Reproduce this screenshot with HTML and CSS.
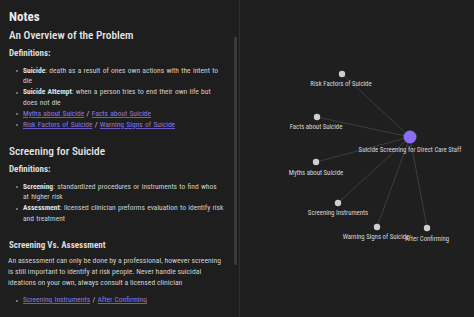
FILE: index.html
```html
<!DOCTYPE html>
<html>
<head>
<meta charset="utf-8">
<link rel="stylesheet" href="styles.css">
</head>
<body>
<div class="app">
  <div class="notes">
    <h1 class="title">Notes</h1>
    <h2 class="h2">An Overview of the Problem</h2>
    <h3 class="h3">Definitions:</h3>
    <ul class="list">
      <li><b>Suicide</b>: death as a result of ones own actions with the intent to die</li>
      <li><b>Suicide Attempt</b>: when a person tries to end their own life but does not die</li>
      <li><a href="#">Myths about Suicide</a> / <a href="#">Facts about Suicide</a></li>
      <li><a href="#">Risk Factors of Suicide</a> / <a href="#">Warning Signs of Suicide</a></li>
    </ul>
    <h2 class="h2 sec">Screening for Suicide</h2>
    <h3 class="h3">Definitions:</h3>
    <ul class="list">
      <li><b>Screening</b>: standardized procedures or instruments to find whos at higher risk</li>
      <li><b>Assessment</b>: licensed clinician preforms evaluation to identify risk and treatment</li>
    </ul>
    <h3 class="h3 sec3">Screening Vs. Assessment</h3>
    <p class="para">An assessment can only be done by a professional, however screening is still important to identify at risk people. Never handle suicidal ideations on your own, always consult a licensed clinician</p>
    <ul class="list">
      <li><a href="#">Screening Instruments</a> / <a href="#">After Confirming</a></li>
    </ul>
    <div class="scrollbar"></div>
  </div>
  <div class="graph">
    <svg class="graph-svg" width="234" height="317" viewBox="0 0 234 317">
      <g class="edges">
        <line x1="170" y1="137" x2="102" y2="74"/>
        <line x1="170" y1="137" x2="77" y2="117"/>
        <line x1="170" y1="137" x2="76" y2="162"/>
        <line x1="170" y1="137" x2="98" y2="203"/>
        <line x1="170" y1="137" x2="137" y2="227"/>
        <line x1="170" y1="137" x2="187" y2="228"/>
      </g>
      <g class="nodes">
        <circle cx="102" cy="74" r="3.2"/>
        <circle cx="77" cy="117" r="3.2"/>
        <circle cx="76" cy="162" r="3.2"/>
        <circle cx="98" cy="203" r="3.2"/>
        <circle cx="137" cy="227" r="3.2"/>
        <circle cx="187" cy="228" r="3.2"/>
        <circle class="hub" cx="170" cy="137" r="6.5"/>
      </g>
      <g class="labels">
        <text x="101" y="85.5">Risk Factors of Suicide</text>
        <text x="76" y="128.5">Facts about Suicide</text>
        <text x="170" y="151.5">Suicide Screening for Direct Care Staff</text>
        <text x="76" y="174.5">Myths about Suicide</text>
        <text x="98" y="214.5">Screening Instruments</text>
        <text x="136" y="238.5">Warning Signs of Suicide</text>
        <text x="187" y="240.5">After Confirming</text>
      </g>
    </svg>
  </div>
</div>
</body>
</html>
```
FILE: styles.css
```css
* { box-sizing: border-box; }
html, body { margin: 0; padding: 0; }
body {
  width: 474px;
  height: 317px;
  overflow: hidden;
  background: #1e1e1e;
  font-family: "Roboto Condensed", "Roboto", sans-serif;
  color: #cfcfcf;
}
.app {
  display: flex;
  width: 474px;
  height: 317px;
}
.notes {
  position: relative;
  width: 240px;
  flex: none;
  padding: 8px 15.5px 0 8px;
  background: #1e1e1e;
  border-right: 1px solid #303030;
  overflow: hidden;
}
.title {
  margin: 0;
  padding-left: 1px;
  font-size: 13px;
  line-height: 18px;
  font-weight: 700;
  color: #ececec;
}
.h2 {
  margin: 2px 0 0;
  padding-left: 1px;
  font-size: 11.3px;
  line-height: 16px;
  font-weight: 500;
  color: #e6e6e6;
}
.h2.sec { margin-top: 13.6px; }
.h3 {
  margin: 3px 0 0;
  padding-left: 1px;
  font-size: 9px;
  line-height: 12px;
  font-weight: 700;
  color: #dcdcdc;
}
.h3.sec3 { margin-top: 14px; }
.list {
  margin: 6.6px 0 0;
  padding: 0 0 0 15px;
  font-size: 7.5px;
  word-spacing: 0.6px;
  line-height: 10.8px;
  list-style: none;
}
.list li { position: relative; }
.list li::before {
  content: "";
  position: absolute;
  left: -7px;
  top: 4.6px;
  width: 2px;
  height: 2px;
  border-radius: 50%;
  background: #8a8a8a;
}
.list b { font-weight: 700; color: #e2e2e2; }
.list a {
  color: #8c78e6;
  text-decoration: underline;
  text-decoration-color: #6c5cc0;
}
.para {
  margin: 5.6px 0 0;
  font-size: 7.7px;
  line-height: 10.7px;
}
.scrollbar {
  position: absolute;
  right: 2px;
  top: 37px;
  width: 3px;
  height: 228px;
  background: #3a3a3a;
  border-radius: 1px;
}
.graph {
  flex: 1;
  background: #1f1f1f;
}
.graph-svg { display: block; }
.edges line { stroke: #454545; stroke-width: 0.8; }
.nodes circle { fill: #cfcfcf; }
.nodes .hub { fill: #8b6cf2; }
.labels text {
  font-family: "Roboto Condensed", "Roboto", sans-serif;
  font-size: 6.8px;
  fill: #d8d8d8;
  text-anchor: middle;
}
```
